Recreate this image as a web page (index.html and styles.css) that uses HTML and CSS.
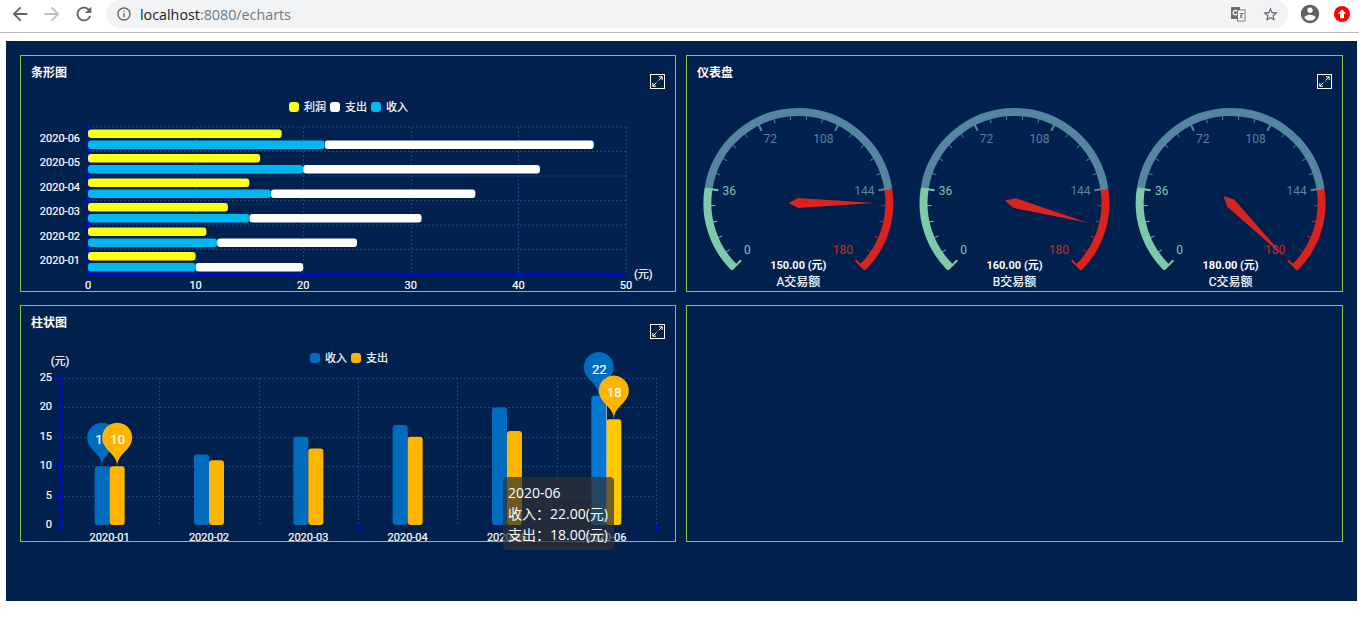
FILE: index.html
```html
<!DOCTYPE html>
<html lang="en">

<head>
    <meta charset="UTF-8">
    <meta name="viewport" content="width=device-width, initial-scale=1.0">
    <title>echarts</title>
    <link rel="stylesheet" href="styles.css">
</head>

<body>
    <header class="toolbar">
        <span class="nav-btn">
            <svg class="icon-nav" viewBox="0 0 24 24"><path d="M20 11H7.83l5.59-5.59L12 4l-8 8 8 8 1.41-1.41L7.83 13H20v-2z"/></svg>
        </span>
        <span class="nav-btn">
            <svg class="icon-nav icon-disabled" viewBox="0 0 24 24"><path d="M4 11h12.17l-5.59-5.59L12 4l8 8-8 8-1.41-1.41L16.17 13H4v-2z"/></svg>
        </span>
        <span class="nav-btn">
            <svg class="icon-nav" viewBox="0 0 24 24"><path d="M17.65 6.35A7.958 7.958 0 0 0 12 4c-4.42 0-7.99 3.58-7.99 8s3.57 8 7.99 8c3.73 0 6.84-2.55 7.73-6h-2.08A5.99 5.99 0 0 1 12 18c-3.31 0-6-2.69-6-6s2.69-6 6-6c1.66 0 3.14.69 4.22 1.78L13 11h7V4l-2.35 2.35z"/></svg>
        </span>

        <div class="omnibox">
            <svg class="icon-info" viewBox="0 0 24 24"><path d="M11 7h2v2h-2zm0 4h2v6h-2zm1-9C6.48 2 2 6.48 2 12s4.48 10 10 10 10-4.48 10-10S17.52 2 12 2zm0 18c-4.41 0-8-3.59-8-8s3.59-8 8-8 8 3.59 8 8-3.59 8-8 8z"/></svg>
            <span class="url"><span class="url-host">localhost</span>:8080/echarts</span>
            <span class="omni-actions">
                <span class="nav-btn">
                    <svg class="icon-translate" viewBox="0 0 16 16">
                        <rect x="1" y="1" width="9" height="12" fill="#6b6f73"/>
                        <circle cx="5.3" cy="6.6" r="2.2" fill="none" stroke="#fff" stroke-width="1.2"/>
                        <rect x="7.5" y="4" width="7.5" height="11" fill="#fff" stroke="#777"/>
                        <path d="M9.5 7.5h4M12.8 7.5l-3 5M10.2 9l3 3.5" fill="none" stroke="#666"/>
                    </svg>
                </span>
                <span class="nav-btn">
                    <svg class="icon-star" viewBox="0 0 24 24"><path d="M22 9.24l-7.19-.62L12 2 9.19 8.63 2 9.24l5.46 4.73L5.82 21 12 17.27 18.18 21l-1.63-7.03L22 9.24zM12 15.4l-3.76 2.27 1-4.28-3.32-2.88 4.38-.38L12 6.1l1.71 4.04 4.38.38-3.32 2.88 1 4.28L12 15.4z"/></svg>
                </span>
            </span>
        </div>

        <span class="nav-btn">
            <svg class="icon-avatar" viewBox="0 0 24 24"><path d="M12 2C6.48 2 2 6.48 2 12s4.48 10 10 10 10-4.48 10-10S17.52 2 12 2zm0 3c1.66 0 3 1.34 3 3s-1.34 3-3 3-3-1.34-3-3 1.34-3 3-3zm0 14.2c-2.5 0-4.71-1.28-6-3.22.03-1.99 4-3.08 6-3.08 1.99 0 5.97 1.09 6 3.08-1.29 1.94-3.5 3.22-6 3.22z"/></svg>
        </span>
        <span class="nav-btn">
            <svg class="icon-ext" viewBox="0 0 16 16">
                <circle cx="8" cy="8" r="8" fill="#f00"/>
                <path d="M8 3.2l4.2 4.6H10v4.4H6V7.8H3.8z" fill="#fff"/>
            </svg>
        </span>
    </header>

    <main class="dashboard">
        <section class="panel">
            <h3 class="panel-title">条形图</h3>
            <svg class="expand" viewBox="0 0 15 15"><rect x="0.5" y="0.5" width="14" height="14"/><path d="M8.5 6.5L12.2 2.8M9 2.8h3.2V6M6.5 8.5L2.8 12.2M6 12.2H2.8V9"/></svg>
            <svg class="chart" id="barChart"></svg>
        </section>

        <section class="panel">
            <h3 class="panel-title">仪表盘</h3>
            <svg class="expand" viewBox="0 0 15 15"><rect x="0.5" y="0.5" width="14" height="14"/><path d="M8.5 6.5L12.2 2.8M9 2.8h3.2V6M6.5 8.5L2.8 12.2M6 12.2H2.8V9"/></svg>
            <svg class="chart" id="gaugeChart"></svg>
        </section>

        <section class="panel">
            <h3 class="panel-title">柱状图</h3>
            <svg class="expand" viewBox="0 0 15 15"><rect x="0.5" y="0.5" width="14" height="14"/><path d="M8.5 6.5L12.2 2.8M9 2.8h3.2V6M6.5 8.5L2.8 12.2M6 12.2H2.8V9"/></svg>
            <svg class="chart" id="columnChart"></svg>
            <div class="tooltip">
                <div>2020-06</div>
                <div>收入：22.00(元)</div>
                <div>支出：18.00(元)</div>
            </div>
        </section>

        <section class="panel"></section>
    </main>

    <script src="charts.js"></script>
</body>

</html>
```

FILE: styles.css
```css
* {
    box-sizing: border-box;
}

html,
body {
    margin: 0;
    background: #fff;
}

body {
    font-family: Roboto, "Noto Sans CJK SC", sans-serif;
    overflow: hidden;
}

/* browser bar */
.toolbar {
    display: flex;
    align-items: flex-start;
    height: 33px;
    padding: 0 1px 0 4px;
    border-bottom: 1px solid #bdbdbd;
}

.nav-btn {
    display: flex;
    align-items: center;
    justify-content: center;
    flex: none;
    width: 32px;
    height: 28px;
}

.icon-nav {
    width: 22px;
    height: 22px;
    fill: #5f6368;
}

.icon-disabled {
    fill: #bdc1c6;
}

.omnibox {
    display: flex;
    align-items: center;
    flex: 1;
    height: 28px;
    margin: 0 6px;
    padding: 0 2px 0 10px;
    border-radius: 14px;
    background: #f1f3f4;
}

.icon-info {
    width: 16px;
    height: 16px;
    margin-right: 8px;
    fill: #5f6368;
}

.url {
    font-family: "Open Sans", sans-serif;
    font-size: 14.3px;
    color: #6b7c88;
}

.url-host {
    color: #202124;
}

.omni-actions {
    display: flex;
    margin-left: auto;
}

.icon-translate {
    width: 16px;
    height: 16px;
}

.icon-star {
    width: 17px;
    height: 17px;
    fill: #5f6368;
}

.icon-avatar {
    width: 22px;
    height: 22px;
    fill: #5f6368;
}

.icon-ext {
    width: 16px;
    height: 16px;
}

/* dashboard */
.dashboard {
    display: grid;
    grid-template-columns: 656px 657px;
    grid-template-rows: 237px 237px;
    column-gap: 10px;
    row-gap: 13px;
    width: 1351px;
    height: 560px;
    margin: 8px 0 0 6px;
    padding: 14px;
    background: #00204d;
}

.panel {
    position: relative;
    border: 1px solid #8fc740;
}

.chart {
    display: block;
    width: 100%;
    height: 100%;
    overflow: visible;
}

.chart text {
    font-family: Roboto, "Noto Sans CJK SC", sans-serif;
    font-size: 11px;
    fill: #fff;
    stroke: #fff;
    stroke-width: 0.2px;
    dominant-baseline: central;
}

.chart text.value {
    font-weight: 700;
    stroke: none;
}

.chart text.name {
    font-size: 12px;
}

.chart text.scale {
    font-size: 12px;
    stroke: none;
}

.chart text.pin-label {
    font-size: 13px;
}

.panel-title {
    position: absolute;
    top: 9px;
    left: 10px;
    margin: 0;
    font-size: 12px;
    font-weight: 700;
    line-height: 16px;
    color: #fff;
}

.expand {
    position: absolute;
    top: 18px;
    right: 10px;
    width: 15px;
    height: 15px;
    fill: none;
    stroke: #fff;
}

.tooltip {
    position: absolute;
    top: 171px;
    left: 482px;
    width: 111px;
    padding: 5px;
    border-radius: 4px;
    background: rgba(50, 50, 50, 0.7);
    font-family: "Open Sans", "Noto Sans CJK SC", sans-serif;
    font-size: 14px;
    line-height: 21px;
    color: #fff;
    white-space: nowrap;
}
```

FILE: charts.js
```js
const months = ['2020-01', '2020-02', '2020-03', '2020-04', '2020-05', '2020-06'];
const income = [10, 12, 15, 17, 20, 22];
const expense = [10, 13, 16, 19, 22, 25];
const profit = [10, 11, 13, 15, 16, 18];
const paid = [10, 11, 13, 15, 16, 18];

const GRID = '#0f4c82';
const AXIS = '#0000ff';

function text(x, y, label, anchor, cls, color) {
    const fill = color ? ` style="fill:${color}"` : '';
    return `<text x="${x}" y="${y}" text-anchor="${anchor || 'middle'}" class="${cls || ''}"${fill}>${label}</text>`;
}

function line(x1, y1, x2, y2, color, width, dash) {
    const d = dash ? ' stroke-dasharray="2 2"' : '';
    return `<line x1="${x1}" y1="${y1}" x2="${x2}" y2="${y2}" stroke="${color}" stroke-width="${width || 1}"${d}/>`;
}

function bar(x, y, w, h, color) {
    return `<rect x="${x}" y="${y}" width="${w}" height="${h}" rx="3" fill="${color}"/>`;
}

function legend(items, y) {
    return items.map(([x, label, color]) =>
        bar(x, y - 5, 10, 10, color) + text(x + 15, y, label, 'start')
    ).join('');
}

// horizontal stacked bars
function drawBarChart() {
    const x0 = 67, x1 = 605, top = 71, bottom = 218;
    const unit = (x1 - x0) / 50, band = (bottom - top) / 6;
    let out = legend([[268, '利润', '#ffff14'], [309, '支出', '#fff'], [350, '收入', '#00b7f1']], 51);

    for (let i = 0; i < 6; i++) {
        const y = Math.round((top + band * i) * 2) / 2;
        out += line(x0, y, x1, y, GRID, 1, true);
        out += line(x0 - 4, y, x0, y, AXIS);
    }
    for (let i = 1; i <= 5; i++) {
        const x = Math.round(x0 + unit * 10 * i) + 0.5;
        out += line(x, top, x, bottom, GRID, 1, true);
    }
    out += line(x0, top, x0, bottom, AXIS, 2);
    out += line(x0, bottom, x1, bottom, AXIS, 2);

    months.forEach((month, i) => {
        const y = bottom - band * (i + 1);
        out += bar(x0, y + 2.5, profit[i] * unit, 8.5, '#ffff14');
        out += bar(x0 + income[i] * unit, y + 13.5, expense[i] * unit, 8.5, '#fff');
        out += bar(x0, y + 13.5, income[i] * unit, 8.5, '#00b7f1');
        out += text(x0 - 8, y + band / 2 - 1, month, 'end');
    });

    for (let i = 0; i <= 5; i++) {
        out += text(x0 + unit * 10 * i, 229, i * 10);
    }
    out += text(613, 218, '(元)', 'start');
    document.getElementById('barChart').innerHTML = out;
}

// pin marker, same shape as the echarts "pin" symbol
function pin(x, y, size, color, label) {
    const w = size / 5 * 3, r = w / 2, dy = r * r / (size - r);
    const cy = y - size + r + dy, a = Math.asin(dy / r), dx = Math.cos(a) * r;
    const tx = Math.sin(a), ty = Math.cos(a), c1 = r * 0.6, c2 = r * 0.7;
    const d = `M${x - dx} ${cy + dy}A${r} ${r} 0 1 1 ${x + dx} ${cy + dy}` +
        `C${x + dx - tx * c1} ${cy + dy + ty * c1} ${x} ${y - c2} ${x} ${y}` +
        `C${x} ${y - c2} ${x - dx + tx * c1} ${cy + dy + ty * c1} ${x - dx} ${cy + dy}Z`;
    return `<path d="${d}" fill="${color}"/>` + text(x + 0.5, cy + 2, label, 'middle', 'pin-label');
}

// vertical columns with min/max pins
function drawColumnChart() {
    const x0 = 39, x1 = 635, top = 72, bottom = 219;
    const unit = (bottom - top) / 25, band = (x1 - x0) / 6;
    const blue = '#006cbe', orange = '#ffb400';
    let out = legend([[289, '收入', blue], [330, '支出', orange]], 52);

    for (let v = 0; v <= 25; v += 5) {
        const y = Math.round(bottom - v * unit) + 0.5;
        if (v > 0) out += line(x0, y, x1, y, GRID, 1, true);
        out += line(x0 - 5, y, x0, y, AXIS);
        out += text(x0 - 8, y - 1, v, 'end');
    }
    for (let i = 0; i <= 6; i++) {
        const x = Math.round(x0 + band * i) + 0.5;
        if (i > 0) out += line(x, top, x, bottom, GRID, 1, true);
        out += line(x, bottom, x, bottom + 5, AXIS);
    }
    out += line(x0, top, x0, bottom, AXIS, 1.5);
    out += line(x0, bottom + 0.5, x1, bottom + 0.5, AXIS);

    months.forEach((month, i) => {
        const c = x0 + band * (i + 0.5);
        const hovered = i === 5;
        out += bar(c - 15, bottom - income[i] * unit, 15, income[i] * unit, hovered ? '#0078d4' : blue);
        out += bar(c, bottom - paid[i] * unit, 15, paid[i] * unit, hovered ? '#ffc800' : orange);
        out += text(c, 231, month);
    });

    out += line(585.5, top, 585.5, bottom, '#aaa');
    out += text(x0, 55.5, '(元)');

    const c0 = x0 + band / 2, c5 = x0 + band * 5.5;
    out += pin(c0 - 7.5, bottom - income[0] * unit, 50, blue, income[0]);
    out += pin(c0 + 7.5, bottom - paid[0] * unit, 50, orange, paid[0]);
    out += pin(c5 - 7.5, bottom - income[5] * unit, 50, blue, income[5]);
    out += pin(c5 + 7.5, bottom - paid[5] * unit, 50, orange, paid[5]);
    document.getElementById('columnChart').innerHTML = out;
}

function gaugeColor(f) {
    if (f <= 0.2) return '#7dcaa9';
    if (f <= 0.8) return '#54879f';
    return '#d8231f';
}

function polar(cx, cy, r, deg) {
    const a = deg * Math.PI / 180;
    return [cx + Math.cos(a) * r, cy - Math.sin(a) * r];
}

function arc(cx, cy, r, from, to, color) {
    const [ax, ay] = polar(cx, cy, r, from);
    const [bx, by] = polar(cx, cy, r, to);
    const large = from - to > 180 ? 1 : 0;
    return `<path d="M${ax} ${ay}A${r} ${r} 0 ${large} 1 ${bx} ${by}" fill="none" stroke="${color}" stroke-width="8"/>`;
}

// scale label centres from the gauge centre (0, 36, 72, 108, 144, 180)
const labelOffsets = [[-51, 47], [-69, -12], [-28, -64], [25, -64], [66, -12], [44.5, 47]];

function gauge(cx, cy, value, name) {
    const R = 95, sweep = 270, start = 225;
    const angle = f => start - sweep * f;
    let out = arc(cx, cy, R - 4, angle(0), angle(0.2), gaugeColor(0.1));
    out += arc(cx, cy, R - 4, angle(0.2), angle(0.8), gaugeColor(0.5));
    out += arc(cx, cy, R - 4, angle(0.8), angle(1), gaugeColor(1));

    for (let i = 0; i <= 25; i++) {
        const f = i / 25, major = i % 5 === 0;
        const [ax, ay] = polar(cx, cy, R - 1, angle(f));
        const [bx, by] = polar(cx, cy, R - (major ? 14 : 12), angle(f));
        out += line(ax, ay, bx, by, gaugeColor(f), major ? 2 : 1);
    }

    // pointer goes under the scale labels
    const deg = angle(value / 180), w = 5;
    const tip = polar(cx, cy, 76, deg), back = polar(cx, cy, -2 * w, deg);
    const s1 = polar(cx, cy, w, deg + 90), s2 = polar(cx, cy, w, deg - 90);
    out += `<polygon points="${[back, s1, tip, s2].map(p => p.join(',')).join(' ')}" fill="${gaugeColor(value / 180)}"/>`;

    labelOffsets.forEach(([dx, dy], i) => {
        out += text(cx + dx, cy + dy, i * 36, 'middle', 'scale', gaugeColor(i / 5));
    });
    out += text(cx, cy + 62, value.toFixed(2) + ' (元)', 'middle', 'value');
    out += text(cx, cy + 79, name, 'middle', 'name');
    return out;
}

function drawGauges() {
    document.getElementById('gaugeChart').innerHTML =
        gauge(111.35, 147, 150, 'A交易额') +
        gauge(327.5, 147, 160, 'B交易额') +
        gauge(543.65, 147, 180, 'C交易额');
}

drawBarChart();
drawColumnChart();
drawGauges();
```
